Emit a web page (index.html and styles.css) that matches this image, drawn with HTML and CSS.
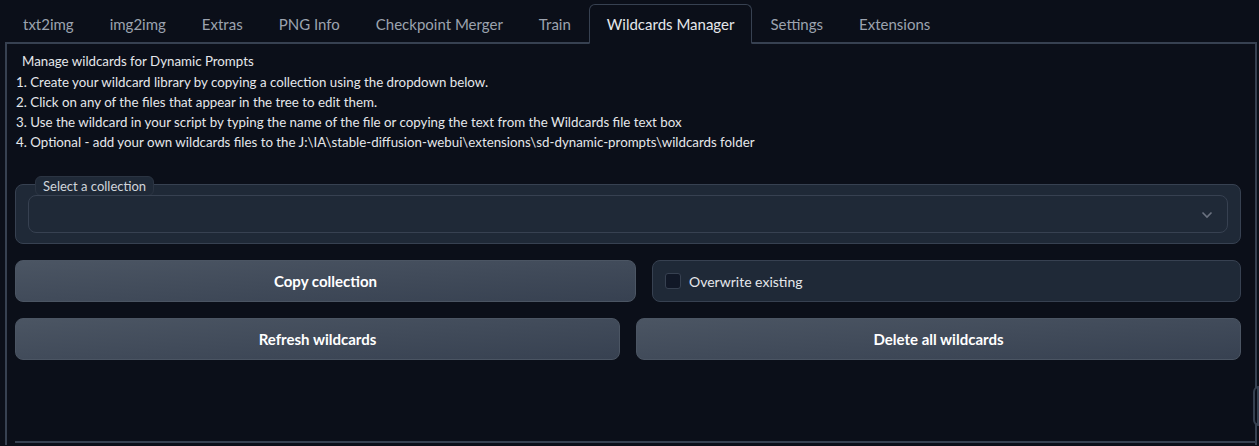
FILE: index.html
```html
<!DOCTYPE html>
<html>
<head>
<meta charset="utf-8">
<link rel="stylesheet" href="styles.css">
</head>
<body>
<div class="tabs">
  <div class="tab">txt2img</div>
  <div class="tab">img2img</div>
  <div class="tab">Extras</div>
  <div class="tab">PNG Info</div>
  <div class="tab">Checkpoint Merger</div>
  <div class="tab">Train</div>
  <div class="tab selected">Wildcards Manager</div>
  <div class="tab">Settings</div>
  <div class="tab">Extensions</div>
</div>
<div class="panel">
  <div class="intro">
    <p class="title">Manage wildcards for Dynamic Prompts</p>
    <p>1. Create your wildcard library by copying a collection using the dropdown below.</p>
    <p>2. Click on any of the files that appear in the tree to edit them.</p>
    <p>3. Use the wildcard in your script by typing the name of the file or copying the text from the Wildcards file text box</p>
    <p>4. Optional - add your own wildcards files to the J:\IA\stable-diffusion-webui\extensions\sd-dynamic-prompts\wildcards folder</p>
  </div>
  <div class="content">
    <div class="block select-block">
      <span class="label">Select a collection</span>
      <div class="select">
        <svg class="chev" width="12" height="8" viewBox="0 0 12 8"><path d="M1.5 1.5 L6 6 L10.5 1.5" fill="none" stroke="#6b7280" stroke-width="1.6"/></svg>
      </div>
    </div>
    <div class="row row1">
      <button class="btn">Copy collection</button>
      <div class="block check-block">
        <span class="checkbox"></span>
        <span class="check-label">Overwrite existing</span>
      </div>
    </div>
    <div class="row row2">
      <button class="btn">Refresh wildcards</button>
      <button class="btn">Delete all wildcards</button>
    </div>
  </div>
  <div class="bottom-line"></div>
  <div class="side-tab"></div>
</div>
</body>
</html>
```
FILE: styles.css
```css
* { box-sizing: border-box; }
html, body { margin: 0; padding: 0; }
body {
  background: #0b0f19;
  color: #e5e7eb;
  font-family: Lato, "Liberation Sans", sans-serif;
  width: 1259px;
  height: 446px;
  overflow: hidden;
}
.tabs {
  display: flex;
  height: 43px;
  padding-left: 5px;
  align-items: flex-end;
  position: relative;
  z-index: 2;
}
.tab {
  font-size: 15px;
  color: #9ca3af;
  padding: 0 17px;
  height: 39px;
  line-height: 38px;
  border: 1px solid transparent;
  border-bottom: none;
}
.tab.selected {
  color: #e5e7eb;
  border: 1px solid #374151;
  border-bottom: 1px solid #0b0f19;
  border-radius: 6px 6px 0 0;
  height: 40px;
  background: #0b0f19;
  margin-bottom: -1px;
}
.panel {
  position: relative;
  margin-left: 5px;
  width: 1252px;
  height: 403px;
  border: 2px solid #374151;
  border-bottom: none;
  margin-top: -1px;
}
.intro {
  padding: 7px 0 0 9px;
  font-size: 13.3px;
  line-height: 20px;
}
.intro p { margin: 0; }
.intro p.title { padding-left: 6px; margin-bottom: 1px; }
.content {
  padding: 32px 14px 0 8px;
  display: flex;
  flex-direction: column;
}
.block {
  background: #1f2937;
  border: 1px solid #374151;
  border-radius: 8px;
}
.select-block {
  position: relative;
  height: 60px;
  padding: 10px 12px 0 12px;
}
.label {
  position: absolute;
  left: 19px;
  top: -9px;
  font-size: 13px;
  line-height: 18px;
  padding: 0 7px;
  background: #1f2937;
  border: 1px solid #2b3442;
  border-radius: 6px;
  color: #d1d5db;
}
.select {
  height: 38px;
  border: 1px solid #374151;
  border-radius: 8px;
  background: #1f2937;
  position: relative;
}
.chev { position: absolute; right: 14px; top: 15px; }
.row { display: flex; gap: 16px; }
.row1 { margin-top: 16px; }
.row2 { margin-top: 16px; }
.btn {
  font-family: inherit;
  font-size: 15px;
  font-weight: 700;
  color: #ffffff;
  height: 42px;
  border: 1px solid #4b5563;
  border-radius: 8px;
  background: linear-gradient(to bottom right, #4b5563, #374151);
  cursor: pointer;
}
.row1 .btn { width: 621px; }
.check-block {
  flex: 1;
  height: 42px;
  display: flex;
  align-items: center;
  padding-left: 12px;
  margin-left: 0;
}
.checkbox {
  width: 16px;
  height: 16px;
  border: 1px solid #374151;
  border-radius: 3px;
  background: #111827;
  margin-right: 8px;
}
.check-label { font-size: 14px; color: #e5e7eb; }
.row2 .btn { flex: 1; }
.bottom-line {
  position: absolute;
  left: 8px;
  right: 0;
  bottom: 2px;
  height: 2px;
  background: #374151;
}
.side-tab {
  position: absolute;
  right: -4px;
  top: 342px;
  width: 6px;
  height: 40px;
  border: 2px solid #374151;
  border-radius: 6px 0 0 6px;
  background: #0b0f19;
}
```
